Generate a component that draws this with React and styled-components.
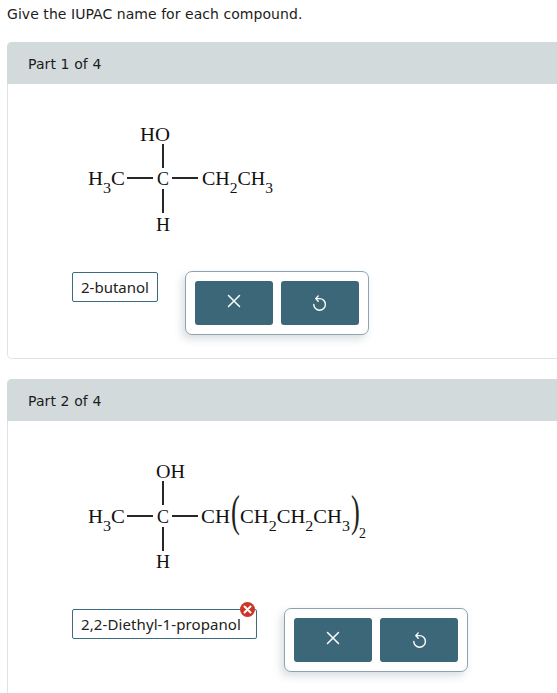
import React from 'react';
import styled, { createGlobalStyle } from 'styled-components';

const Global = createGlobalStyle`
  html, body {
    margin: 0;
    padding: 0;
    background: #fff;
    overflow: hidden;
    height: 693px;
  }
`;

function CloseIcon() {
  return (
    <RaisedIcon width="14" height="14" viewBox="0 0 14 14" fill="none" stroke="#fff" strokeWidth="1.5" strokeLinecap="round">
      <path d="M1.5 1.5 L12.5 12.5 M12.5 1.5 L1.5 12.5" />
    </RaisedIcon>
  );
}

function ResetIcon() {
  return (
    <svg width="15" height="17" viewBox="0 0 15 17" fill="none" stroke="#fff" strokeWidth="1.4" strokeLinecap="round" strokeLinejoin="round">
      <path d="M4.2 3.6 H7.6 A5.8 5.8 0 1 1 1.8 9.4" />
      <path d="M6.2 0.9 L3.8 3.6 L6.2 6.3" />
    </svg>
  );
}

function Tools() {
  return (
    <Toolbar>
      <ToolButton aria-label="Clear"><CloseIcon /></ToolButton>
      <ToolButton aria-label="Reset"><ResetIcon /></ToolButton>
    </Toolbar>
  );
}

function Bond({ x1, y1, x2, y2 }) {
  return <line x1={x1} y1={y1} x2={x2} y2={y2} stroke="#000" strokeWidth="1.7" />;
}

// the glyphs in the drawing are wider than plain Times, so each label gets its measured width
function Label({ x, y, width, children }) {
  return (
    <Atom x={x} y={y} textLength={width} lengthAdjust="spacingAndGlyphs">
      {children}
    </Atom>
  );
}

function ButanolDrawing() {
  return (
    <Drawing width="320" height="156" viewBox="0 0 320 156">
      <Label x="70" y="26" width="30">HO</Label>
      <Bond x1="93" y1="29" x2="93" y2="53" />
      <Label x="18" y="70" width="37">H<Sub dy="8">3</Sub><tspan dy="-8">C</tspan></Label>
      <Bond x1="57" y1="63" x2="83" y2="63" />
      <Label x="87" y="70" width="12">C</Label>
      <Bond x1="102" y1="63" x2="128" y2="63" />
      <Label x="132" y="70" width="71">CH<Sub dy="8">2</Sub><tspan dy="-8">CH</tspan><Sub dy="8">3</Sub></Label>
      <Bond x1="93" y1="74" x2="93" y2="98" />
      <Label x="86" y="116" width="14">H</Label>
    </Drawing>
  );
}

function PropanolDrawing() {
  return (
    <Drawing width="320" height="156" viewBox="0 0 320 156">
      <Label x="86" y="26" width="29">OH</Label>
      <Bond x1="93" y1="29" x2="93" y2="53" />
      <Label x="18" y="71" width="37">H<Sub dy="8">3</Sub><tspan dy="-8">C</tspan></Label>
      <Bond x1="57" y1="64" x2="83" y2="64" />
      <Label x="87" y="71" width="12">C</Label>
      <Bond x1="102" y1="64" x2="128" y2="64" />
      <Label x="131" y="71" width="29">CH</Label>
      <Paren transform="translate(161 74) scale(0.6 1)">(</Paren>
      <Label x="170" y="71" width="110">CH<Sub dy="8">2</Sub><tspan dy="-8">CH</tspan><Sub dy="8">2</Sub><tspan dy="-8">CH</tspan><Sub dy="8">3</Sub></Label>
      <Paren transform="translate(281 74) scale(0.6 1)">)</Paren>
      <SubLabel x="289" y="86">2</SubLabel>
      <Bond x1="93" y1="75" x2="93" y2="99" />
      <Label x="86" y="116" width="14">H</Label>
    </Drawing>
  );
}

export default function App() {
  return (
    <>
      <Global />
      <Page>
        <Prompt>Give the IUPAC name for each compound.</Prompt>
        <Part>
          <PartHeader>Part 1 of 4</PartHeader>
          <PartBody>
            <ButanolDrawing />
            <AnswerRow>
              <Answer>2-butanol</Answer>
              <Tools />
            </AnswerRow>
          </PartBody>
        </Part>
        <Part>
          <PartHeader>Part 2 of 4</PartHeader>
          <PartBody>
            <PropanolDrawing />
            <AnswerRow>
              <Answer $marked>
                2,2-Diethyl-1-propanol
                <WrongBadge>
                  <svg width="9" height="9" viewBox="0 0 9 9" fill="none" stroke="#fff" strokeWidth="2" strokeLinecap="round">
                    <path d="M1.5 1.5 L7.5 7.5 M7.5 1.5 L1.5 7.5" />
                  </svg>
                </WrongBadge>
              </Answer>
              <Tools />
            </AnswerRow>
          </PartBody>
        </Part>
      </Page>
    </>
  );
}

const Page = styled.div`
  width: 557px;
  height: 693px;
  overflow: hidden;
  padding-left: 7px;
  box-sizing: border-box;
  font-family: 'DejaVu Sans', Verdana, sans-serif;
  color: #1c1c1c;
`;

const Prompt = styled.p`
  margin: 0 0 20px;
  padding-top: 6px;
  font-size: 14px;
  letter-spacing: 0.05px;
  line-height: 16px;
`;

const Part = styled.section`
  width: 600px;
  margin-bottom: 20px;
  border: 1px solid #dfe3e3;
  border-top: 0;
  border-radius: 5px;
  box-sizing: border-box;
`;

const PartHeader = styled.div`
  height: 42px;
  margin-left: -1px;
  padding: 2px 0 0 21px;
  display: flex;
  align-items: center;
  box-sizing: border-box;
  background: #d3dadc;
  border-radius: 5px 5px 0 0;
  font-size: 14px;
  letter-spacing: 0.1px;
`;

const PartBody = styled.div`
  padding: 31px 0 23px 64px;
`;

const Drawing = styled.svg`
  display: block;
  margin-left: -2px;
`;

const Atom = styled.text`
  font-family: 'Liberation Serif', 'Times New Roman', serif;
  font-size: 18px;
  fill: #111;
`;

const Sub = styled.tspan`
  font-size: 14px;
`;

const SubLabel = styled(Atom)`
  font-size: 14px;
`;

const Paren = styled.text`
  font-family: 'Liberation Serif', 'Times New Roman', serif;
  font-size: 44px;
  fill: #222;
`;

const AnswerRow = styled.div`
  display: flex;
  align-items: flex-start;
  gap: 27px;
`;

const Answer = styled.div`
  position: relative;
  margin-top: 1px;
  height: 30px;
  padding: 0 ${({ $marked }) => ($marked ? '15px' : '8px')} 0 8px;
  display: flex;
  align-items: center;
  box-sizing: border-box;
  border: 1px solid #3b6c82;
  border-radius: 2px;
  font-family: 'Noto Sans', 'Open Sans', sans-serif;
  font-size: 15px;
  letter-spacing: ${({ $marked }) => ($marked ? '0.1px' : '0')};
  color: #222;
`;

const WrongBadge = styled.span`
  position: absolute;
  top: -8px;
  right: 1px;
  width: 15px;
  height: 15px;
  display: flex;
  align-items: center;
  justify-content: center;
  background: #cc3527;
  border-radius: 50%;
`;

const Toolbar = styled.div`
  display: flex;
  gap: 8px;
  padding: 9px;
  background: #fff;
  border: 1px solid #8fa3ae;
  border-radius: 7px;
  box-shadow: -3px 4px 8px rgba(60, 90, 105, 0.2);
`;

const ToolButton = styled.button`
  width: 78px;
  height: 44px;
  padding: 0;
  display: flex;
  align-items: center;
  justify-content: center;
  background: #3b6779;
  border: 0;
  border-radius: 3px;
`;

const RaisedIcon = styled.svg`
  margin-bottom: 4px;
`;
